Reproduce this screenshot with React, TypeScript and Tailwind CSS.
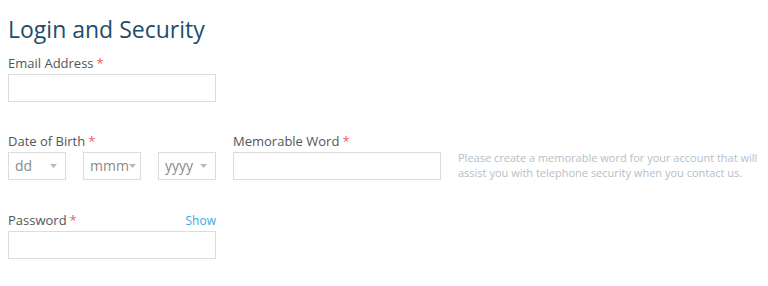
const labelCls = "block text-[13px] leading-[18px] text-[#555]";

function Star() {
  return <span className="ml-[3px] text-[#f05a6a]">*</span>;
}

function Caret() {
  return (
    <svg width="7" height="4" viewBox="0 0 7 4" className="shrink-0">
      <path d="M0 0h7L3.5 4z" fill="#b9b9b9" />
    </svg>
  );
}

function DateSelect({ text }: { text: string }) {
  return (
    <div className="flex h-[28px] w-[58px] items-center justify-between border border-[#dcdcdc] bg-white pl-[6px] pr-[8px]">
      <span className="text-[14px] leading-none text-[#8a8a8a]">{text}</span>
      <Caret />
    </div>
  );
}

export default function App() {
  return (
    <div
      className="min-h-[286px] bg-white px-[8px] pt-[14px]"
      style={{ fontFamily: '"Open Sans", "Noto Sans", sans-serif' }}
    >
      <h1 className="text-[23px] leading-[30px] font-normal text-[#1e4d6b]">
        Login and Security
      </h1>

      <div className="mt-[10px] w-[208px]">
        <label className={labelCls}>
          Email Address<Star />
        </label>
        <input
          type="email"
          className="mt-[2px] block h-[28px] w-[208px] border border-[#dcdcdc] bg-white outline-none"
        />
      </div>

      <div className="mt-[30px] flex items-start gap-[17px]">
        <div className="w-[208px]">
          <label className={labelCls}>
            Date of Birth<Star />
          </label>
          <div className="mt-[2px] flex gap-[17px]">
            <DateSelect text="dd" />
            <DateSelect text="mmm" />
            <DateSelect text="yyyy" />
          </div>
        </div>
        <div className="w-[208px]">
          <label className={labelCls}>
            Memorable Word<Star />
          </label>
          <input
            type="text"
            className="mt-[2px] block h-[28px] w-[208px] border border-[#dcdcdc] bg-white outline-none"
          />
        </div>
        <p className="mt-[18px] w-[300px] text-[11px] leading-[15px] text-[#b5bec9]">
          Please create a memorable word for your account that will assist you with
          telephone security when you contact us.
        </p>
      </div>

      <div className="mt-[31px] w-[208px]">
        <div className="flex items-end justify-between">
          <label className={labelCls}>
            Password<Star />
          </label>
          <button type="button" className="text-[12px] leading-[16px] text-[#42a5e6]">
            Show
          </button>
        </div>
        <input
          type="password"
          className="mt-[2px] block h-[28px] w-[208px] border border-[#dcdcdc] bg-white outline-none"
        />
      </div>
    </div>
  );
}
